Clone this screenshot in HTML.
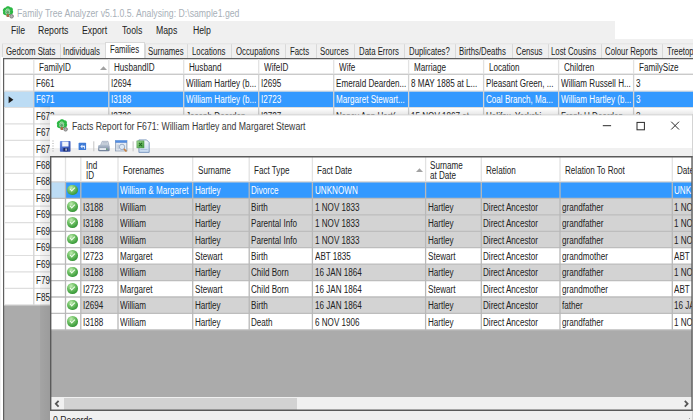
<!DOCTYPE html>
<html><head><meta charset="utf-8"><style>
html,body{margin:0;padding:0;}
body{width:695px;height:420px;overflow:hidden;position:relative;background:#f0f0f0;font-family:"Liberation Sans",sans-serif;}
.r{position:absolute;}
.t{position:absolute;white-space:nowrap;font-size:10px;line-height:10px;transform-origin:0 0;}
.s{transform:scaleX(0.87);}
.m{transform:scaleX(0.81);}
.chk{width:10.5px;height:10.5px;border-radius:50%;background:radial-gradient(circle at 38% 28%,#c2ecb4 0%,#78c66c 32%,#41a040 68%,#2b7d2d 100%);}
.chk::after{content:"";position:absolute;left:3.1px;top:2.6px;width:4.2px;height:2.2px;border-left:1.3px solid #f4fff2;border-bottom:1.3px solid #f4fff2;transform:rotate(-45deg);}
</style></head><body>
<div class="r" style="left:0px;top:0px;width:695px;height:21px;background:#fff;"></div>
<div class="r" style="left:0px;top:21px;width:615px;height:18px;background:#f0f0f0;"></div>
<div class="r" style="left:615px;top:21px;width:80px;height:18px;background:#fff;"></div>
<div class="r" style="left:0px;top:39px;width:695px;height:381px;background:#f0f0f0;"></div>
<svg class="r" style="left:1px;top:5px" width="14" height="14" viewBox="0 0 14 14">
<path d="M2.3 6.8 C1.2 5.2 2.4 2.6 4.4 2.7 C4.9 0.9 8.3 0.6 9.1 2.2 C11 1.8 12.6 3.7 11.7 5.6 C12.9 7.2 11.6 9.9 9.6 9.6 C8.6 11 5.2 11 4.2 9.9 C2.4 10.2 1.3 8.4 2.3 6.8Z" fill="#2cb844"/>
<path d="M4.6 5.6 C5 3.6 8.4 3.6 8.8 5.6" fill="none" stroke="#d8ecd8" stroke-width="0.9"/>
<circle cx="6.7" cy="7.4" r="2" fill="#5aa868" stroke="#c8d8c8" stroke-width="0.8"/>
<rect x="5.6" y="9" width="2.4" height="3" fill="#a86c4a"/>
<circle cx="10.6" cy="11.3" r="1.8" fill="#b0b0b0" stroke="#707070" stroke-width="0.8"/>
</svg>
<div class="t s" style="left:17.20px;top:8.83px;color:#a8b0b8;">Family Tree Analyzer v5.1.0.5. Analysing: D:\sample1.ged</div>
<div class="t s" style="left:11.00px;top:25.73px;color:#222;">File</div>
<div class="t s" style="left:38.30px;top:25.73px;color:#222;">Reports</div>
<div class="t s" style="left:82.40px;top:25.73px;color:#222;">Export</div>
<div class="t s" style="left:121.80px;top:25.73px;color:#222;">Tools</div>
<div class="t s" style="left:156.30px;top:25.73px;color:#222;">Maps</div>
<div class="t s" style="left:192.90px;top:25.73px;color:#222;">Help</div>
<svg class="r" style="left:0px;top:40px" width="695" height="19" viewBox="0 40 695 19"><line x1="2.5" y1="44" x2="2.5" y2="58" stroke="#d9d9d9" stroke-width="1"/><line x1="60.5" y1="44" x2="60.5" y2="58" stroke="#d9d9d9" stroke-width="1"/><line x1="145.5" y1="44" x2="145.5" y2="58" stroke="#d9d9d9" stroke-width="1"/><line x1="187.5" y1="44" x2="187.5" y2="58" stroke="#d9d9d9" stroke-width="1"/><line x1="231.5" y1="44" x2="231.5" y2="58" stroke="#d9d9d9" stroke-width="1"/><line x1="285.5" y1="44" x2="285.5" y2="58" stroke="#d9d9d9" stroke-width="1"/><line x1="316.5" y1="44" x2="316.5" y2="58" stroke="#d9d9d9" stroke-width="1"/><line x1="354.5" y1="44" x2="354.5" y2="58" stroke="#d9d9d9" stroke-width="1"/><line x1="404.5" y1="44" x2="404.5" y2="58" stroke="#d9d9d9" stroke-width="1"/><line x1="455.5" y1="44" x2="455.5" y2="58" stroke="#d9d9d9" stroke-width="1"/><line x1="512.5" y1="44" x2="512.5" y2="58" stroke="#d9d9d9" stroke-width="1"/><line x1="548.5" y1="44" x2="548.5" y2="58" stroke="#d9d9d9" stroke-width="1"/><line x1="601.5" y1="44" x2="601.5" y2="58" stroke="#d9d9d9" stroke-width="1"/><line x1="662.5" y1="44" x2="662.5" y2="58" stroke="#d9d9d9" stroke-width="1"/><line x1="2" y1="43.8" x2="693" y2="43.8" stroke="#e3e3e3" stroke-width="1"/></svg>
<div class="r" style="left:105px;top:42px;width:40px;height:17px;background:#fff;border:1px solid #d9d9d9;border-bottom:none;box-sizing:border-box"></div>
<div class="t m" style="left:5.69px;top:46.73px;color:#222;transform:scaleX(0.78)">Gedcom Stats</div>
<div class="t m" style="left:63.47px;top:46.73px;color:#222;transform:scaleX(0.78)">Individuals</div>
<div class="t m" style="left:109.88px;top:45.13px;color:#222;transform:scaleX(0.78)">Families</div>
<div class="t m" style="left:147.62px;top:46.73px;color:#222;transform:scaleX(0.78)">Surnames</div>
<div class="t m" style="left:191.70px;top:46.73px;color:#222;transform:scaleX(0.78)">Locations</div>
<div class="t m" style="left:235.72px;top:46.73px;color:#222;transform:scaleX(0.78)">Occupations</div>
<div class="t m" style="left:290.36px;top:46.73px;color:#222;transform:scaleX(0.78)">Facts</div>
<div class="t m" style="left:320.34px;top:46.73px;color:#222;transform:scaleX(0.78)">Sources</div>
<div class="t m" style="left:358.71px;top:46.73px;color:#222;transform:scaleX(0.78)">Data Errors</div>
<div class="t m" style="left:408.52px;top:46.73px;color:#222;transform:scaleX(0.78)">Duplicates?</div>
<div class="t m" style="left:459.49px;top:46.73px;color:#222;transform:scaleX(0.78)">Births/Deaths</div>
<div class="t m" style="left:516.18px;top:46.73px;color:#222;transform:scaleX(0.78)">Census</div>
<div class="t m" style="left:551.35px;top:46.73px;color:#222;transform:scaleX(0.78)">Lost Cousins</div>
<div class="t m" style="left:604.87px;top:46.73px;color:#222;transform:scaleX(0.78)">Colour Reports</div>
<div class="t m" style="left:666.90px;top:46.73px;color:#222;transform:scaleX(0.78)">Treetop Analysis</div>
<div class="r" style="left:1px;top:57px;width:1.5px;height:363px;background:#fff;"></div>
<div class="r" style="left:3px;top:58px;width:690px;height:362px;background:#ababab;"></div>
<div class="r" style="left:4px;top:59px;width:689px;height:15px;background:#fff;"></div>
<div class="r" style="left:4px;top:75px;width:689px;height:230px;background:#fff;"></div>
<div class="r" style="left:4px;top:91px;width:30px;height:16px;background:#bcdcf4;"></div>
<div class="r" style="left:34px;top:91px;width:659px;height:16px;background:#3399ff;"></div>
<svg class="r" style="left:8px;top:95.5px" width="6" height="8"><path d="M0.6 0.3 L5.4 3.8 L0.6 7.3Z" fill="#1a1a1a"/></svg>
<svg class="r" style="left:3px;top:58px" width="690" height="362" viewBox="3 58 690 362"><line x1="3" y1="58.5" x2="693" y2="58.5" stroke="#5e5e5e" stroke-width="1.4"/><line x1="3.5" y1="58" x2="3.5" y2="420" stroke="#5e5e5e" stroke-width="1.4"/><line x1="4" y1="74.2" x2="693" y2="74.2" stroke="#d4d4d4" stroke-width="1.3"/><line x1="33.8" y1="59" x2="33.8" y2="74" stroke="#e2e2e2" stroke-width="1.3"/><line x1="108.8" y1="59" x2="108.8" y2="74" stroke="#e2e2e2" stroke-width="1.3"/><line x1="183.7" y1="59" x2="183.7" y2="74" stroke="#e2e2e2" stroke-width="1.3"/><line x1="258.7" y1="59" x2="258.7" y2="74" stroke="#e2e2e2" stroke-width="1.3"/><line x1="333.7" y1="59" x2="333.7" y2="74" stroke="#e2e2e2" stroke-width="1.3"/><line x1="408.6" y1="59" x2="408.6" y2="74" stroke="#e2e2e2" stroke-width="1.3"/><line x1="483.6" y1="59" x2="483.6" y2="74" stroke="#e2e2e2" stroke-width="1.3"/><line x1="558.6" y1="59" x2="558.6" y2="74" stroke="#e2e2e2" stroke-width="1.3"/><line x1="633.6" y1="59" x2="633.6" y2="74" stroke="#e2e2e2" stroke-width="1.3"/><line x1="4" y1="91.046" x2="693" y2="91.046" stroke="#dedede" stroke-width="1.2"/><line x1="33.8" y1="74.6" x2="33.8" y2="91.046" stroke="#d2d2d2" stroke-width="1.3"/><line x1="108.8" y1="74.6" x2="108.8" y2="91.046" stroke="#d2d2d2" stroke-width="1.3"/><line x1="183.7" y1="74.6" x2="183.7" y2="91.046" stroke="#d2d2d2" stroke-width="1.3"/><line x1="258.7" y1="74.6" x2="258.7" y2="91.046" stroke="#d2d2d2" stroke-width="1.3"/><line x1="333.7" y1="74.6" x2="333.7" y2="91.046" stroke="#d2d2d2" stroke-width="1.3"/><line x1="408.6" y1="74.6" x2="408.6" y2="91.046" stroke="#d2d2d2" stroke-width="1.3"/><line x1="483.6" y1="74.6" x2="483.6" y2="91.046" stroke="#d2d2d2" stroke-width="1.3"/><line x1="558.6" y1="74.6" x2="558.6" y2="91.046" stroke="#d2d2d2" stroke-width="1.3"/><line x1="633.6" y1="74.6" x2="633.6" y2="91.046" stroke="#d2d2d2" stroke-width="1.3"/><line x1="4" y1="107.492" x2="693" y2="107.492" stroke="#dedede" stroke-width="1.2"/><line x1="33.8" y1="91.046" x2="33.8" y2="107.492" stroke="#d2d2d2" stroke-width="1.3"/><line x1="108.8" y1="91.046" x2="108.8" y2="107.492" stroke="#d2d2d2" stroke-width="1.3"/><line x1="183.7" y1="91.046" x2="183.7" y2="107.492" stroke="#d2d2d2" stroke-width="1.3"/><line x1="258.7" y1="91.046" x2="258.7" y2="107.492" stroke="#d2d2d2" stroke-width="1.3"/><line x1="333.7" y1="91.046" x2="333.7" y2="107.492" stroke="#d2d2d2" stroke-width="1.3"/><line x1="408.6" y1="91.046" x2="408.6" y2="107.492" stroke="#d2d2d2" stroke-width="1.3"/><line x1="483.6" y1="91.046" x2="483.6" y2="107.492" stroke="#d2d2d2" stroke-width="1.3"/><line x1="558.6" y1="91.046" x2="558.6" y2="107.492" stroke="#d2d2d2" stroke-width="1.3"/><line x1="633.6" y1="91.046" x2="633.6" y2="107.492" stroke="#d2d2d2" stroke-width="1.3"/><line x1="4" y1="123.938" x2="693" y2="123.938" stroke="#dedede" stroke-width="1.2"/><line x1="33.8" y1="107.492" x2="33.8" y2="123.938" stroke="#d2d2d2" stroke-width="1.3"/><line x1="108.8" y1="107.492" x2="108.8" y2="123.938" stroke="#d2d2d2" stroke-width="1.3"/><line x1="183.7" y1="107.492" x2="183.7" y2="123.938" stroke="#d2d2d2" stroke-width="1.3"/><line x1="258.7" y1="107.492" x2="258.7" y2="123.938" stroke="#d2d2d2" stroke-width="1.3"/><line x1="333.7" y1="107.492" x2="333.7" y2="123.938" stroke="#d2d2d2" stroke-width="1.3"/><line x1="408.6" y1="107.492" x2="408.6" y2="123.938" stroke="#d2d2d2" stroke-width="1.3"/><line x1="483.6" y1="107.492" x2="483.6" y2="123.938" stroke="#d2d2d2" stroke-width="1.3"/><line x1="558.6" y1="107.492" x2="558.6" y2="123.938" stroke="#d2d2d2" stroke-width="1.3"/><line x1="633.6" y1="107.492" x2="633.6" y2="123.938" stroke="#d2d2d2" stroke-width="1.3"/><line x1="4" y1="140.384" x2="693" y2="140.384" stroke="#dedede" stroke-width="1.2"/><line x1="33.8" y1="123.938" x2="33.8" y2="140.384" stroke="#d2d2d2" stroke-width="1.3"/><line x1="108.8" y1="123.938" x2="108.8" y2="140.384" stroke="#d2d2d2" stroke-width="1.3"/><line x1="183.7" y1="123.938" x2="183.7" y2="140.384" stroke="#d2d2d2" stroke-width="1.3"/><line x1="258.7" y1="123.938" x2="258.7" y2="140.384" stroke="#d2d2d2" stroke-width="1.3"/><line x1="333.7" y1="123.938" x2="333.7" y2="140.384" stroke="#d2d2d2" stroke-width="1.3"/><line x1="408.6" y1="123.938" x2="408.6" y2="140.384" stroke="#d2d2d2" stroke-width="1.3"/><line x1="483.6" y1="123.938" x2="483.6" y2="140.384" stroke="#d2d2d2" stroke-width="1.3"/><line x1="558.6" y1="123.938" x2="558.6" y2="140.384" stroke="#d2d2d2" stroke-width="1.3"/><line x1="633.6" y1="123.938" x2="633.6" y2="140.384" stroke="#d2d2d2" stroke-width="1.3"/><line x1="4" y1="156.83" x2="693" y2="156.83" stroke="#dedede" stroke-width="1.2"/><line x1="33.8" y1="140.384" x2="33.8" y2="156.83" stroke="#d2d2d2" stroke-width="1.3"/><line x1="108.8" y1="140.384" x2="108.8" y2="156.83" stroke="#d2d2d2" stroke-width="1.3"/><line x1="183.7" y1="140.384" x2="183.7" y2="156.83" stroke="#d2d2d2" stroke-width="1.3"/><line x1="258.7" y1="140.384" x2="258.7" y2="156.83" stroke="#d2d2d2" stroke-width="1.3"/><line x1="333.7" y1="140.384" x2="333.7" y2="156.83" stroke="#d2d2d2" stroke-width="1.3"/><line x1="408.6" y1="140.384" x2="408.6" y2="156.83" stroke="#d2d2d2" stroke-width="1.3"/><line x1="483.6" y1="140.384" x2="483.6" y2="156.83" stroke="#d2d2d2" stroke-width="1.3"/><line x1="558.6" y1="140.384" x2="558.6" y2="156.83" stroke="#d2d2d2" stroke-width="1.3"/><line x1="633.6" y1="140.384" x2="633.6" y2="156.83" stroke="#d2d2d2" stroke-width="1.3"/><line x1="4" y1="173.276" x2="693" y2="173.276" stroke="#dedede" stroke-width="1.2"/><line x1="33.8" y1="156.83" x2="33.8" y2="173.276" stroke="#d2d2d2" stroke-width="1.3"/><line x1="108.8" y1="156.83" x2="108.8" y2="173.276" stroke="#d2d2d2" stroke-width="1.3"/><line x1="183.7" y1="156.83" x2="183.7" y2="173.276" stroke="#d2d2d2" stroke-width="1.3"/><line x1="258.7" y1="156.83" x2="258.7" y2="173.276" stroke="#d2d2d2" stroke-width="1.3"/><line x1="333.7" y1="156.83" x2="333.7" y2="173.276" stroke="#d2d2d2" stroke-width="1.3"/><line x1="408.6" y1="156.83" x2="408.6" y2="173.276" stroke="#d2d2d2" stroke-width="1.3"/><line x1="483.6" y1="156.83" x2="483.6" y2="173.276" stroke="#d2d2d2" stroke-width="1.3"/><line x1="558.6" y1="156.83" x2="558.6" y2="173.276" stroke="#d2d2d2" stroke-width="1.3"/><line x1="633.6" y1="156.83" x2="633.6" y2="173.276" stroke="#d2d2d2" stroke-width="1.3"/><line x1="4" y1="189.722" x2="693" y2="189.722" stroke="#dedede" stroke-width="1.2"/><line x1="33.8" y1="173.276" x2="33.8" y2="189.722" stroke="#d2d2d2" stroke-width="1.3"/><line x1="108.8" y1="173.276" x2="108.8" y2="189.722" stroke="#d2d2d2" stroke-width="1.3"/><line x1="183.7" y1="173.276" x2="183.7" y2="189.722" stroke="#d2d2d2" stroke-width="1.3"/><line x1="258.7" y1="173.276" x2="258.7" y2="189.722" stroke="#d2d2d2" stroke-width="1.3"/><line x1="333.7" y1="173.276" x2="333.7" y2="189.722" stroke="#d2d2d2" stroke-width="1.3"/><line x1="408.6" y1="173.276" x2="408.6" y2="189.722" stroke="#d2d2d2" stroke-width="1.3"/><line x1="483.6" y1="173.276" x2="483.6" y2="189.722" stroke="#d2d2d2" stroke-width="1.3"/><line x1="558.6" y1="173.276" x2="558.6" y2="189.722" stroke="#d2d2d2" stroke-width="1.3"/><line x1="633.6" y1="173.276" x2="633.6" y2="189.722" stroke="#d2d2d2" stroke-width="1.3"/><line x1="4" y1="206.168" x2="693" y2="206.168" stroke="#dedede" stroke-width="1.2"/><line x1="33.8" y1="189.722" x2="33.8" y2="206.168" stroke="#d2d2d2" stroke-width="1.3"/><line x1="108.8" y1="189.722" x2="108.8" y2="206.168" stroke="#d2d2d2" stroke-width="1.3"/><line x1="183.7" y1="189.722" x2="183.7" y2="206.168" stroke="#d2d2d2" stroke-width="1.3"/><line x1="258.7" y1="189.722" x2="258.7" y2="206.168" stroke="#d2d2d2" stroke-width="1.3"/><line x1="333.7" y1="189.722" x2="333.7" y2="206.168" stroke="#d2d2d2" stroke-width="1.3"/><line x1="408.6" y1="189.722" x2="408.6" y2="206.168" stroke="#d2d2d2" stroke-width="1.3"/><line x1="483.6" y1="189.722" x2="483.6" y2="206.168" stroke="#d2d2d2" stroke-width="1.3"/><line x1="558.6" y1="189.722" x2="558.6" y2="206.168" stroke="#d2d2d2" stroke-width="1.3"/><line x1="633.6" y1="189.722" x2="633.6" y2="206.168" stroke="#d2d2d2" stroke-width="1.3"/><line x1="4" y1="222.614" x2="693" y2="222.614" stroke="#dedede" stroke-width="1.2"/><line x1="33.8" y1="206.168" x2="33.8" y2="222.614" stroke="#d2d2d2" stroke-width="1.3"/><line x1="108.8" y1="206.168" x2="108.8" y2="222.614" stroke="#d2d2d2" stroke-width="1.3"/><line x1="183.7" y1="206.168" x2="183.7" y2="222.614" stroke="#d2d2d2" stroke-width="1.3"/><line x1="258.7" y1="206.168" x2="258.7" y2="222.614" stroke="#d2d2d2" stroke-width="1.3"/><line x1="333.7" y1="206.168" x2="333.7" y2="222.614" stroke="#d2d2d2" stroke-width="1.3"/><line x1="408.6" y1="206.168" x2="408.6" y2="222.614" stroke="#d2d2d2" stroke-width="1.3"/><line x1="483.6" y1="206.168" x2="483.6" y2="222.614" stroke="#d2d2d2" stroke-width="1.3"/><line x1="558.6" y1="206.168" x2="558.6" y2="222.614" stroke="#d2d2d2" stroke-width="1.3"/><line x1="633.6" y1="206.168" x2="633.6" y2="222.614" stroke="#d2d2d2" stroke-width="1.3"/><line x1="4" y1="239.06" x2="693" y2="239.06" stroke="#dedede" stroke-width="1.2"/><line x1="33.8" y1="222.614" x2="33.8" y2="239.06" stroke="#d2d2d2" stroke-width="1.3"/><line x1="108.8" y1="222.614" x2="108.8" y2="239.06" stroke="#d2d2d2" stroke-width="1.3"/><line x1="183.7" y1="222.614" x2="183.7" y2="239.06" stroke="#d2d2d2" stroke-width="1.3"/><line x1="258.7" y1="222.614" x2="258.7" y2="239.06" stroke="#d2d2d2" stroke-width="1.3"/><line x1="333.7" y1="222.614" x2="333.7" y2="239.06" stroke="#d2d2d2" stroke-width="1.3"/><line x1="408.6" y1="222.614" x2="408.6" y2="239.06" stroke="#d2d2d2" stroke-width="1.3"/><line x1="483.6" y1="222.614" x2="483.6" y2="239.06" stroke="#d2d2d2" stroke-width="1.3"/><line x1="558.6" y1="222.614" x2="558.6" y2="239.06" stroke="#d2d2d2" stroke-width="1.3"/><line x1="633.6" y1="222.614" x2="633.6" y2="239.06" stroke="#d2d2d2" stroke-width="1.3"/><line x1="4" y1="255.506" x2="693" y2="255.506" stroke="#dedede" stroke-width="1.2"/><line x1="33.8" y1="239.06" x2="33.8" y2="255.506" stroke="#d2d2d2" stroke-width="1.3"/><line x1="108.8" y1="239.06" x2="108.8" y2="255.506" stroke="#d2d2d2" stroke-width="1.3"/><line x1="183.7" y1="239.06" x2="183.7" y2="255.506" stroke="#d2d2d2" stroke-width="1.3"/><line x1="258.7" y1="239.06" x2="258.7" y2="255.506" stroke="#d2d2d2" stroke-width="1.3"/><line x1="333.7" y1="239.06" x2="333.7" y2="255.506" stroke="#d2d2d2" stroke-width="1.3"/><line x1="408.6" y1="239.06" x2="408.6" y2="255.506" stroke="#d2d2d2" stroke-width="1.3"/><line x1="483.6" y1="239.06" x2="483.6" y2="255.506" stroke="#d2d2d2" stroke-width="1.3"/><line x1="558.6" y1="239.06" x2="558.6" y2="255.506" stroke="#d2d2d2" stroke-width="1.3"/><line x1="633.6" y1="239.06" x2="633.6" y2="255.506" stroke="#d2d2d2" stroke-width="1.3"/><line x1="4" y1="271.952" x2="693" y2="271.952" stroke="#dedede" stroke-width="1.2"/><line x1="33.8" y1="255.506" x2="33.8" y2="271.952" stroke="#d2d2d2" stroke-width="1.3"/><line x1="108.8" y1="255.506" x2="108.8" y2="271.952" stroke="#d2d2d2" stroke-width="1.3"/><line x1="183.7" y1="255.506" x2="183.7" y2="271.952" stroke="#d2d2d2" stroke-width="1.3"/><line x1="258.7" y1="255.506" x2="258.7" y2="271.952" stroke="#d2d2d2" stroke-width="1.3"/><line x1="333.7" y1="255.506" x2="333.7" y2="271.952" stroke="#d2d2d2" stroke-width="1.3"/><line x1="408.6" y1="255.506" x2="408.6" y2="271.952" stroke="#d2d2d2" stroke-width="1.3"/><line x1="483.6" y1="255.506" x2="483.6" y2="271.952" stroke="#d2d2d2" stroke-width="1.3"/><line x1="558.6" y1="255.506" x2="558.6" y2="271.952" stroke="#d2d2d2" stroke-width="1.3"/><line x1="633.6" y1="255.506" x2="633.6" y2="271.952" stroke="#d2d2d2" stroke-width="1.3"/><line x1="4" y1="288.398" x2="693" y2="288.398" stroke="#dedede" stroke-width="1.2"/><line x1="33.8" y1="271.952" x2="33.8" y2="288.398" stroke="#d2d2d2" stroke-width="1.3"/><line x1="108.8" y1="271.952" x2="108.8" y2="288.398" stroke="#d2d2d2" stroke-width="1.3"/><line x1="183.7" y1="271.952" x2="183.7" y2="288.398" stroke="#d2d2d2" stroke-width="1.3"/><line x1="258.7" y1="271.952" x2="258.7" y2="288.398" stroke="#d2d2d2" stroke-width="1.3"/><line x1="333.7" y1="271.952" x2="333.7" y2="288.398" stroke="#d2d2d2" stroke-width="1.3"/><line x1="408.6" y1="271.952" x2="408.6" y2="288.398" stroke="#d2d2d2" stroke-width="1.3"/><line x1="483.6" y1="271.952" x2="483.6" y2="288.398" stroke="#d2d2d2" stroke-width="1.3"/><line x1="558.6" y1="271.952" x2="558.6" y2="288.398" stroke="#d2d2d2" stroke-width="1.3"/><line x1="633.6" y1="271.952" x2="633.6" y2="288.398" stroke="#d2d2d2" stroke-width="1.3"/><line x1="4" y1="304.844" x2="693" y2="304.844" stroke="#dedede" stroke-width="1.2"/><line x1="33.8" y1="288.398" x2="33.8" y2="304.844" stroke="#d2d2d2" stroke-width="1.3"/><line x1="108.8" y1="288.398" x2="108.8" y2="304.844" stroke="#d2d2d2" stroke-width="1.3"/><line x1="183.7" y1="288.398" x2="183.7" y2="304.844" stroke="#d2d2d2" stroke-width="1.3"/><line x1="258.7" y1="288.398" x2="258.7" y2="304.844" stroke="#d2d2d2" stroke-width="1.3"/><line x1="333.7" y1="288.398" x2="333.7" y2="304.844" stroke="#d2d2d2" stroke-width="1.3"/><line x1="408.6" y1="288.398" x2="408.6" y2="304.844" stroke="#d2d2d2" stroke-width="1.3"/><line x1="483.6" y1="288.398" x2="483.6" y2="304.844" stroke="#d2d2d2" stroke-width="1.3"/><line x1="558.6" y1="288.398" x2="558.6" y2="304.844" stroke="#d2d2d2" stroke-width="1.3"/><line x1="633.6" y1="288.398" x2="633.6" y2="304.844" stroke="#d2d2d2" stroke-width="1.3"/></svg>
<div class="t m" style="left:39.00px;top:62.53px;color:#222;">FamilyID</div>
<div class="t m" style="left:114.00px;top:62.53px;color:#222;">HusbandID</div>
<div class="t m" style="left:188.90px;top:62.53px;color:#222;">Husband</div>
<div class="t m" style="left:263.90px;top:62.53px;color:#222;">WifeID</div>
<div class="t m" style="left:338.90px;top:62.53px;color:#222;">Wife</div>
<div class="t m" style="left:413.80px;top:62.53px;color:#222;">Marriage</div>
<div class="t m" style="left:488.80px;top:62.53px;color:#222;">Location</div>
<div class="t m" style="left:563.80px;top:62.53px;color:#222;">Children</div>
<div class="t m" style="left:638.80px;top:62.53px;color:#222;">FamilySize</div>
<svg class="r" style="left:100px;top:65.5px" width="7" height="4"><path d="M0 4 L3.5 0.3 L7 4Z" fill="#a2a2a2"/></svg>
<div class="t m" style="left:36.10px;top:78.73px;color:#222;">F661</div>
<div class="t m" style="left:111.10px;top:78.73px;color:#222;">I2694</div>
<div class="t m" style="left:186.00px;top:78.73px;color:#222;">William Hartley (b...</div>
<div class="t m" style="left:261.00px;top:78.73px;color:#222;">I2695</div>
<div class="t m" style="left:336.00px;top:78.73px;color:#222;">Emerald Dearden...</div>
<div class="t m" style="left:410.90px;top:78.73px;color:#222;">8 MAY 1885 at L...</div>
<div class="t m" style="left:485.90px;top:78.73px;color:#222;">Pleasant Green, ...</div>
<div class="t m" style="left:560.90px;top:78.73px;color:#222;">William Russell H...</div>
<div class="t m" style="left:635.90px;top:78.73px;color:#222;">3</div>
<div class="t m" style="left:36.10px;top:95.18px;color:#fff;">F671</div>
<div class="t m" style="left:111.10px;top:95.18px;color:#fff;">I3188</div>
<div class="t m" style="left:186.00px;top:95.18px;color:#fff;">William Hartley (b...</div>
<div class="t m" style="left:261.00px;top:95.18px;color:#fff;">I2723</div>
<div class="t m" style="left:336.00px;top:95.18px;color:#fff;">Margaret Stewart...</div>
<div class="t m" style="left:485.90px;top:95.18px;color:#fff;">Coal Branch, Ma...</div>
<div class="t m" style="left:560.90px;top:95.18px;color:#fff;">William Hartley (b...</div>
<div class="t m" style="left:635.90px;top:95.18px;color:#fff;">3</div>
<div class="t m" style="left:36.10px;top:111.62px;color:#222;">F672</div>
<div class="t m" style="left:111.10px;top:111.62px;color:#222;">I2726</div>
<div class="t m" style="left:186.00px;top:111.62px;color:#222;">Joseph Dearden ...</div>
<div class="t m" style="left:261.00px;top:111.62px;color:#222;">I2727</div>
<div class="t m" style="left:336.00px;top:111.62px;color:#222;">Nancy Ann Hart(...</div>
<div class="t m" style="left:410.90px;top:111.62px;color:#222;">15 NOV 1867 at ...</div>
<div class="t m" style="left:485.90px;top:111.62px;color:#222;">Halifax, Yorkshi...</div>
<div class="t m" style="left:560.90px;top:111.62px;color:#222;">Frank H Dearden...</div>
<div class="t m" style="left:635.90px;top:111.62px;color:#222;">3</div>
<div class="t m" style="left:36.10px;top:128.07px;color:#222;">F673</div>
<div class="t m" style="left:36.10px;top:144.51px;color:#222;">F674</div>
<div class="t m" style="left:36.10px;top:160.96px;color:#222;">F681</div>
<div class="t m" style="left:36.10px;top:177.41px;color:#222;">F682</div>
<div class="t m" style="left:36.10px;top:193.85px;color:#222;">F691</div>
<div class="t m" style="left:36.10px;top:210.30px;color:#222;">F692</div>
<div class="t m" style="left:36.10px;top:226.74px;color:#222;">F693</div>
<div class="t m" style="left:36.10px;top:243.19px;color:#222;">F694</div>
<div class="t m" style="left:36.10px;top:259.64px;color:#222;">F695</div>
<div class="t m" style="left:36.10px;top:276.08px;color:#222;">F791</div>
<div class="t m" style="left:36.10px;top:292.53px;color:#222;">F851</div>
<div class="r" style="left:693px;top:21px;width:2px;height:399px;background:#fff;"></div>
<div class="r" style="left:40px;top:106px;width:10px;height:314px;background:linear-gradient(to right,rgba(0,0,0,0.04),rgba(0,0,0,0.09))"></div>
<div class="r" style="left:50px;top:107.5px;width:643px;height:7px;background:linear-gradient(to bottom,rgba(0,0,0,0),rgba(0,0,0,0.1))"></div>
<div class="r" style="left:50px;top:114.5px;width:643px;height:305.5px;background:#fff;"></div>
<svg class="r" style="left:50px;top:114px" width="643" height="306" viewBox="50 114 643 306"><line x1="50" y1="114.9" x2="693" y2="114.9" stroke="#d4d4d4" stroke-width="1"/><line x1="692.6" y1="114" x2="692.6" y2="420" stroke="#d0d0d0" stroke-width="1"/></svg>
<svg class="r" style="left:55px;top:117.5px" width="14" height="14" viewBox="0 0 14 14">
<path d="M2.3 6.8 C1.2 5.2 2.4 2.6 4.4 2.7 C4.9 0.9 8.3 0.6 9.1 2.2 C11 1.8 12.6 3.7 11.7 5.6 C12.9 7.2 11.6 9.9 9.6 9.6 C8.6 11 5.2 11 4.2 9.9 C2.4 10.2 1.3 8.4 2.3 6.8Z" fill="#2cb844"/>
<path d="M4.6 5.6 C5 3.6 8.4 3.6 8.8 5.6" fill="none" stroke="#d8ecd8" stroke-width="0.9"/>
<circle cx="6.7" cy="7.4" r="2" fill="#5aa868" stroke="#c8d8c8" stroke-width="0.8"/>
<rect x="5.6" y="9" width="2.4" height="3" fill="#a86c4a"/>
<circle cx="10.6" cy="11.3" r="1.8" fill="#b0b0b0" stroke="#707070" stroke-width="0.8"/>
</svg>
<div class="t s" style="left:71.50px;top:121.63px;color:#383838;">Facts Report for F671: William Hartley and Margaret Stewart</div>
<svg class="r" style="left:600px;top:119px" width="82" height="12">
<path d="M2.8 6.7 H11.1" stroke="#2a2a2a" stroke-width="1" fill="none"/>
<rect x="37" y="3.4" width="7.4" height="7.4" stroke="#2a2a2a" stroke-width="1" fill="none"/>
<path d="M71.2 2.7 L79 10.5 M79 2.7 L71.2 10.5" stroke="#2a2a2a" stroke-width="1" fill="none"/>
</svg>
<div class="r" style="left:50px;top:147.5px;width:642px;height:8.5px;background:#f0f0f0;"></div>
<svg class="r" style="left:52px;top:139px" width="100" height="15" viewBox="52 139 100 15">
<g fill="#a8a8a8"><rect x="52.5" y="140.5" width="1" height="1"/><rect x="52.5" y="143" width="1" height="1"/><rect x="52.5" y="145.5" width="1" height="1"/><rect x="52.5" y="148" width="1" height="1"/><rect x="52.5" y="150.5" width="1" height="1"/></g>
<defs><linearGradient id="fl" x1="0" y1="0" x2="1" y2="1"><stop offset="0" stop-color="#7c9cec"/><stop offset="0.5" stop-color="#4666c8"/><stop offset="1" stop-color="#2a449c"/></linearGradient>
<linearGradient id="xg" x1="0" y1="0" x2="1" y2="1"><stop offset="0" stop-color="#a6dc96"/><stop offset="1" stop-color="#3c9a3c"/></linearGradient>
<linearGradient id="dc" x1="0" y1="0" x2="0" y2="1"><stop offset="0" stop-color="#f4f8fc"/><stop offset="1" stop-color="#c4d8f0"/></linearGradient></defs>
<rect x="59.9" y="141" width="10.6" height="10.7" rx="0.8" fill="url(#fl)"/>
<rect x="62.2" y="141.6" width="6.3" height="4.9" fill="#f2f4fa"/>
<rect x="63.4" y="148" width="4.2" height="3.3" fill="#1c2a60"/>
<rect x="65.4" y="148.5" width="1.4" height="2.2" fill="#c8d0e8"/>
<rect x="78.6" y="142.8" width="7.5" height="7.2" rx="0.6" fill="#3d7ad6"/>
<path d="M80.3 146.4 L82.4 144.4 L82.4 148.4Z" fill="#e9f1ff"/>
<rect x="82.2" y="145.7" width="2.2" height="1.4" fill="#e9f1ff"/>
<rect x="84" y="145.7" width="0.9" height="3" fill="#e9f1ff"/>
<rect x="93.3" y="141.3" width="1" height="10" fill="#c4c4c4"/>
<defs><linearGradient id="pb" x1="0" y1="0" x2="0" y2="1"><stop offset="0" stop-color="#b4c0d0"/><stop offset="1" stop-color="#6a7b94"/></linearGradient>
<linearGradient id="pv" x1="0" y1="0" x2="0" y2="1"><stop offset="0" stop-color="#6aa4f0"/><stop offset="1" stop-color="#3a78d8"/></linearGradient></defs>
<path d="M100.6 145.2 L102.2 141.3 H108 L108.9 145.2Z" fill="#d6dde6" stroke="#8d9bb0" stroke-width="0.6"/>
<path d="M102.8 142.5 H107.2 M102.4 143.8 H107.6" stroke="#a9b5c4" stroke-width="0.6"/>
<rect x="98.1" y="145" width="11.6" height="6.3" rx="1.4" fill="url(#pb)"/>
<rect x="99.4" y="148.2" width="6.6" height="1.7" fill="#f3f6fa"/>
<circle cx="106.8" cy="149.1" r="0.6" fill="#56b04e"/>
<rect x="115.3" y="140.3" width="11.7" height="10.7" fill="#c3cfde" stroke="#7b8da6" stroke-width="0.6"/>
<rect x="115.3" y="140.3" width="11.7" height="2.3" fill="url(#pv)"/>
<rect x="116.3" y="143" width="9.7" height="7.3" fill="#e6ecf4"/>
<path d="M117.2 144.5 V149.5 M118.6 144.5 V149.5" stroke="#b6c2d2" stroke-width="0.8"/>
<circle cx="122" cy="146.9" r="2.7" fill="#dde9f6" stroke="#8ba0bc" stroke-width="0.8"/>
<path d="M123.9 148.9 L126.5 151.5" stroke="#c8803e" stroke-width="1.7"/>
<rect x="132.6" y="141.3" width="1" height="10" fill="#c4c4c4"/>
<path d="M138.9 139.9 H146.6 L149.2 142.5 V152.4 H138.9Z" fill="url(#dc)" stroke="#6f8db8" stroke-width="0.8"/>
<path d="M140.5 149.5 H147.5" stroke="#9fb8d8" stroke-width="0.7"/>
<rect x="136.9" y="140.9" width="7.1" height="7" fill="url(#xg)" stroke="#3f8f3f" stroke-width="0.5"/>
<path d="M139 142.8 L142 146.2 M142 142.8 L139 146.2" stroke="#1f6a22" stroke-width="1.1"/>
</svg>
<div class="r" style="left:51px;top:157px;width:641px;height:253px;overflow:hidden;background:#ababab">
<div class="r" style="left:0px;top:0px;width:641px;height:25px;background:#fff;"></div>
<div class="r" style="left:0px;top:25px;width:14.5px;height:16px;background:#bcdcf4;"></div>
<div class="r" style="left:14.5px;top:25px;width:627px;height:16px;background:#3399ff;"></div>
<div class="r" style="left:0px;top:41px;width:30px;height:17px;background:#fff;"></div>
<div class="r" style="left:30px;top:41px;width:611px;height:17px;background:#d3d3d3;"></div>
<div class="r" style="left:0px;top:58px;width:30px;height:16px;background:#fff;"></div>
<div class="r" style="left:30px;top:58px;width:611px;height:16px;background:#d3d3d3;"></div>
<div class="r" style="left:0px;top:74px;width:30px;height:17px;background:#fff;"></div>
<div class="r" style="left:30px;top:74px;width:611px;height:17px;background:#d3d3d3;"></div>
<div class="r" style="left:0px;top:91px;width:30px;height:16px;background:#fff;"></div>
<div class="r" style="left:30px;top:91px;width:611px;height:16px;background:#fff;"></div>
<div class="r" style="left:0px;top:107px;width:30px;height:17px;background:#fff;"></div>
<div class="r" style="left:30px;top:107px;width:611px;height:17px;background:#d3d3d3;"></div>
<div class="r" style="left:0px;top:124px;width:30px;height:16px;background:#fff;"></div>
<div class="r" style="left:30px;top:124px;width:611px;height:16px;background:#fff;"></div>
<div class="r" style="left:0px;top:140px;width:30px;height:16px;background:#fff;"></div>
<div class="r" style="left:30px;top:140px;width:611px;height:16px;background:#d3d3d3;"></div>
<div class="r" style="left:0px;top:156px;width:30px;height:17px;background:#fff;"></div>
<div class="r" style="left:30px;top:156px;width:611px;height:17px;background:#fff;"></div>
<svg class="r" style="left:0px;top:0px" width="641" height="253" viewBox="51 157 641 253"><line x1="51" y1="181.8" x2="692" y2="181.8" stroke="#d0d0d0" stroke-width="1.3"/><line x1="65.5" y1="157" x2="65.5" y2="181.5" stroke="#e2e2e2" stroke-width="1.3"/><line x1="80.8" y1="157" x2="80.8" y2="181.5" stroke="#e2e2e2" stroke-width="1.3"/><line x1="118" y1="157" x2="118" y2="181.5" stroke="#e2e2e2" stroke-width="1.3"/><line x1="192.7" y1="157" x2="192.7" y2="181.5" stroke="#e2e2e2" stroke-width="1.3"/><line x1="249.2" y1="157" x2="249.2" y2="181.5" stroke="#e2e2e2" stroke-width="1.3"/><line x1="312.4" y1="157" x2="312.4" y2="181.5" stroke="#e2e2e2" stroke-width="1.3"/><line x1="425.6" y1="157" x2="425.6" y2="181.5" stroke="#e2e2e2" stroke-width="1.3"/><line x1="481.3" y1="157" x2="481.3" y2="181.5" stroke="#e2e2e2" stroke-width="1.3"/><line x1="560" y1="157" x2="560" y2="181.5" stroke="#e2e2e2" stroke-width="1.3"/><line x1="672.3" y1="157" x2="672.3" y2="181.5" stroke="#e2e2e2" stroke-width="1.3"/><line x1="51" y1="198.43" x2="692" y2="198.43" stroke="#bdbdbd" stroke-width="1.3"/><line x1="65.5" y1="182" x2="65.5" y2="198.43" stroke="#b8b8b8" stroke-width="1.3"/><line x1="80.8" y1="182" x2="80.8" y2="198.43" stroke="#b8b8b8" stroke-width="1.3"/><line x1="118" y1="182" x2="118" y2="198.43" stroke="#b8b8b8" stroke-width="1.3"/><line x1="192.7" y1="182" x2="192.7" y2="198.43" stroke="#b8b8b8" stroke-width="1.3"/><line x1="249.2" y1="182" x2="249.2" y2="198.43" stroke="#b8b8b8" stroke-width="1.3"/><line x1="312.4" y1="182" x2="312.4" y2="198.43" stroke="#b8b8b8" stroke-width="1.3"/><line x1="425.6" y1="182" x2="425.6" y2="198.43" stroke="#b8b8b8" stroke-width="1.3"/><line x1="481.3" y1="182" x2="481.3" y2="198.43" stroke="#b8b8b8" stroke-width="1.3"/><line x1="560" y1="182" x2="560" y2="198.43" stroke="#b8b8b8" stroke-width="1.3"/><line x1="672.3" y1="182" x2="672.3" y2="198.43" stroke="#b8b8b8" stroke-width="1.3"/><line x1="51" y1="214.86" x2="692" y2="214.86" stroke="#bdbdbd" stroke-width="1.3"/><line x1="65.5" y1="198.43" x2="65.5" y2="214.86" stroke="#b8b8b8" stroke-width="1.3"/><line x1="80.8" y1="198.43" x2="80.8" y2="214.86" stroke="#b8b8b8" stroke-width="1.3"/><line x1="118" y1="198.43" x2="118" y2="214.86" stroke="#b8b8b8" stroke-width="1.3"/><line x1="192.7" y1="198.43" x2="192.7" y2="214.86" stroke="#b8b8b8" stroke-width="1.3"/><line x1="249.2" y1="198.43" x2="249.2" y2="214.86" stroke="#b8b8b8" stroke-width="1.3"/><line x1="312.4" y1="198.43" x2="312.4" y2="214.86" stroke="#b8b8b8" stroke-width="1.3"/><line x1="425.6" y1="198.43" x2="425.6" y2="214.86" stroke="#b8b8b8" stroke-width="1.3"/><line x1="481.3" y1="198.43" x2="481.3" y2="214.86" stroke="#b8b8b8" stroke-width="1.3"/><line x1="560" y1="198.43" x2="560" y2="214.86" stroke="#b8b8b8" stroke-width="1.3"/><line x1="672.3" y1="198.43" x2="672.3" y2="214.86" stroke="#b8b8b8" stroke-width="1.3"/><line x1="51" y1="231.29" x2="692" y2="231.29" stroke="#bdbdbd" stroke-width="1.3"/><line x1="65.5" y1="214.86" x2="65.5" y2="231.29" stroke="#b8b8b8" stroke-width="1.3"/><line x1="80.8" y1="214.86" x2="80.8" y2="231.29" stroke="#b8b8b8" stroke-width="1.3"/><line x1="118" y1="214.86" x2="118" y2="231.29" stroke="#b8b8b8" stroke-width="1.3"/><line x1="192.7" y1="214.86" x2="192.7" y2="231.29" stroke="#b8b8b8" stroke-width="1.3"/><line x1="249.2" y1="214.86" x2="249.2" y2="231.29" stroke="#b8b8b8" stroke-width="1.3"/><line x1="312.4" y1="214.86" x2="312.4" y2="231.29" stroke="#b8b8b8" stroke-width="1.3"/><line x1="425.6" y1="214.86" x2="425.6" y2="231.29" stroke="#b8b8b8" stroke-width="1.3"/><line x1="481.3" y1="214.86" x2="481.3" y2="231.29" stroke="#b8b8b8" stroke-width="1.3"/><line x1="560" y1="214.86" x2="560" y2="231.29" stroke="#b8b8b8" stroke-width="1.3"/><line x1="672.3" y1="214.86" x2="672.3" y2="231.29" stroke="#b8b8b8" stroke-width="1.3"/><line x1="51" y1="247.72" x2="692" y2="247.72" stroke="#bdbdbd" stroke-width="1.3"/><line x1="65.5" y1="231.29" x2="65.5" y2="247.72" stroke="#b8b8b8" stroke-width="1.3"/><line x1="80.8" y1="231.29" x2="80.8" y2="247.72" stroke="#b8b8b8" stroke-width="1.3"/><line x1="118" y1="231.29" x2="118" y2="247.72" stroke="#b8b8b8" stroke-width="1.3"/><line x1="192.7" y1="231.29" x2="192.7" y2="247.72" stroke="#b8b8b8" stroke-width="1.3"/><line x1="249.2" y1="231.29" x2="249.2" y2="247.72" stroke="#b8b8b8" stroke-width="1.3"/><line x1="312.4" y1="231.29" x2="312.4" y2="247.72" stroke="#b8b8b8" stroke-width="1.3"/><line x1="425.6" y1="231.29" x2="425.6" y2="247.72" stroke="#b8b8b8" stroke-width="1.3"/><line x1="481.3" y1="231.29" x2="481.3" y2="247.72" stroke="#b8b8b8" stroke-width="1.3"/><line x1="560" y1="231.29" x2="560" y2="247.72" stroke="#b8b8b8" stroke-width="1.3"/><line x1="672.3" y1="231.29" x2="672.3" y2="247.72" stroke="#b8b8b8" stroke-width="1.3"/><line x1="51" y1="264.15" x2="692" y2="264.15" stroke="#bdbdbd" stroke-width="1.3"/><line x1="65.5" y1="247.72" x2="65.5" y2="264.15" stroke="#b8b8b8" stroke-width="1.3"/><line x1="80.8" y1="247.72" x2="80.8" y2="264.15" stroke="#b8b8b8" stroke-width="1.3"/><line x1="118" y1="247.72" x2="118" y2="264.15" stroke="#b8b8b8" stroke-width="1.3"/><line x1="192.7" y1="247.72" x2="192.7" y2="264.15" stroke="#b8b8b8" stroke-width="1.3"/><line x1="249.2" y1="247.72" x2="249.2" y2="264.15" stroke="#b8b8b8" stroke-width="1.3"/><line x1="312.4" y1="247.72" x2="312.4" y2="264.15" stroke="#b8b8b8" stroke-width="1.3"/><line x1="425.6" y1="247.72" x2="425.6" y2="264.15" stroke="#b8b8b8" stroke-width="1.3"/><line x1="481.3" y1="247.72" x2="481.3" y2="264.15" stroke="#b8b8b8" stroke-width="1.3"/><line x1="560" y1="247.72" x2="560" y2="264.15" stroke="#b8b8b8" stroke-width="1.3"/><line x1="672.3" y1="247.72" x2="672.3" y2="264.15" stroke="#b8b8b8" stroke-width="1.3"/><line x1="51" y1="280.58" x2="692" y2="280.58" stroke="#bdbdbd" stroke-width="1.3"/><line x1="65.5" y1="264.15" x2="65.5" y2="280.58" stroke="#b8b8b8" stroke-width="1.3"/><line x1="80.8" y1="264.15" x2="80.8" y2="280.58" stroke="#b8b8b8" stroke-width="1.3"/><line x1="118" y1="264.15" x2="118" y2="280.58" stroke="#b8b8b8" stroke-width="1.3"/><line x1="192.7" y1="264.15" x2="192.7" y2="280.58" stroke="#b8b8b8" stroke-width="1.3"/><line x1="249.2" y1="264.15" x2="249.2" y2="280.58" stroke="#b8b8b8" stroke-width="1.3"/><line x1="312.4" y1="264.15" x2="312.4" y2="280.58" stroke="#b8b8b8" stroke-width="1.3"/><line x1="425.6" y1="264.15" x2="425.6" y2="280.58" stroke="#b8b8b8" stroke-width="1.3"/><line x1="481.3" y1="264.15" x2="481.3" y2="280.58" stroke="#b8b8b8" stroke-width="1.3"/><line x1="560" y1="264.15" x2="560" y2="280.58" stroke="#b8b8b8" stroke-width="1.3"/><line x1="672.3" y1="264.15" x2="672.3" y2="280.58" stroke="#b8b8b8" stroke-width="1.3"/><line x1="51" y1="297.01" x2="692" y2="297.01" stroke="#bdbdbd" stroke-width="1.3"/><line x1="65.5" y1="280.58" x2="65.5" y2="297.01" stroke="#b8b8b8" stroke-width="1.3"/><line x1="80.8" y1="280.58" x2="80.8" y2="297.01" stroke="#b8b8b8" stroke-width="1.3"/><line x1="118" y1="280.58" x2="118" y2="297.01" stroke="#b8b8b8" stroke-width="1.3"/><line x1="192.7" y1="280.58" x2="192.7" y2="297.01" stroke="#b8b8b8" stroke-width="1.3"/><line x1="249.2" y1="280.58" x2="249.2" y2="297.01" stroke="#b8b8b8" stroke-width="1.3"/><line x1="312.4" y1="280.58" x2="312.4" y2="297.01" stroke="#b8b8b8" stroke-width="1.3"/><line x1="425.6" y1="280.58" x2="425.6" y2="297.01" stroke="#b8b8b8" stroke-width="1.3"/><line x1="481.3" y1="280.58" x2="481.3" y2="297.01" stroke="#b8b8b8" stroke-width="1.3"/><line x1="560" y1="280.58" x2="560" y2="297.01" stroke="#b8b8b8" stroke-width="1.3"/><line x1="672.3" y1="280.58" x2="672.3" y2="297.01" stroke="#b8b8b8" stroke-width="1.3"/><line x1="51" y1="313.44" x2="692" y2="313.44" stroke="#bdbdbd" stroke-width="1.3"/><line x1="65.5" y1="297.01" x2="65.5" y2="313.44" stroke="#b8b8b8" stroke-width="1.3"/><line x1="80.8" y1="297.01" x2="80.8" y2="313.44" stroke="#b8b8b8" stroke-width="1.3"/><line x1="118" y1="297.01" x2="118" y2="313.44" stroke="#b8b8b8" stroke-width="1.3"/><line x1="192.7" y1="297.01" x2="192.7" y2="313.44" stroke="#b8b8b8" stroke-width="1.3"/><line x1="249.2" y1="297.01" x2="249.2" y2="313.44" stroke="#b8b8b8" stroke-width="1.3"/><line x1="312.4" y1="297.01" x2="312.4" y2="313.44" stroke="#b8b8b8" stroke-width="1.3"/><line x1="425.6" y1="297.01" x2="425.6" y2="313.44" stroke="#b8b8b8" stroke-width="1.3"/><line x1="481.3" y1="297.01" x2="481.3" y2="313.44" stroke="#b8b8b8" stroke-width="1.3"/><line x1="560" y1="297.01" x2="560" y2="313.44" stroke="#b8b8b8" stroke-width="1.3"/><line x1="672.3" y1="297.01" x2="672.3" y2="313.44" stroke="#b8b8b8" stroke-width="1.3"/><line x1="51" y1="329.87" x2="692" y2="329.87" stroke="#bdbdbd" stroke-width="1.3"/><line x1="65.5" y1="313.44" x2="65.5" y2="329.87" stroke="#b8b8b8" stroke-width="1.3"/><line x1="80.8" y1="313.44" x2="80.8" y2="329.87" stroke="#b8b8b8" stroke-width="1.3"/><line x1="118" y1="313.44" x2="118" y2="329.87" stroke="#b8b8b8" stroke-width="1.3"/><line x1="192.7" y1="313.44" x2="192.7" y2="329.87" stroke="#b8b8b8" stroke-width="1.3"/><line x1="249.2" y1="313.44" x2="249.2" y2="329.87" stroke="#b8b8b8" stroke-width="1.3"/><line x1="312.4" y1="313.44" x2="312.4" y2="329.87" stroke="#b8b8b8" stroke-width="1.3"/><line x1="425.6" y1="313.44" x2="425.6" y2="329.87" stroke="#b8b8b8" stroke-width="1.3"/><line x1="481.3" y1="313.44" x2="481.3" y2="329.87" stroke="#b8b8b8" stroke-width="1.3"/><line x1="560" y1="313.44" x2="560" y2="329.87" stroke="#b8b8b8" stroke-width="1.3"/><line x1="672.3" y1="313.44" x2="672.3" y2="329.87" stroke="#b8b8b8" stroke-width="1.3"/></svg>
<div class="t m" style="left:34.80px;top:3.83px;color:#222;">Ind</div>
<div class="t m" style="left:34.80px;top:13.53px;color:#222;">ID</div>
<div class="t m" style="left:72.00px;top:9.13px;color:#222;">Forenames</div>
<div class="t m" style="left:146.70px;top:9.13px;color:#222;">Surname</div>
<div class="t m" style="left:203.20px;top:9.13px;color:#222;">Fact Type</div>
<div class="t m" style="left:266.40px;top:9.13px;color:#222;">Fact Date</div>
<div class="t m" style="left:435.30px;top:9.13px;color:#222;">Relation</div>
<div class="t m" style="left:514.00px;top:9.13px;color:#222;">Relation To Root</div>
<div class="t m" style="left:626.30px;top:9.13px;color:#222;">Date</div>
<div class="t m" style="left:379.20px;top:4.03px;color:#222;">Surname</div>
<div class="t m" style="left:379.20px;top:13.53px;color:#222;">at Date</div>
<svg class="r" style="left:364.5px;top:11px" width="7" height="4"><path d="M0 4 L3.5 0.3 L7 4Z" fill="#a2a2a2"/></svg>
<div class="r chk" style="left:16.400000000000006px;top:27.60px"></div>
<div class="t m" style="left:69.10px;top:29.33px;color:#fff;">William &amp; Margaret</div>
<div class="t m" style="left:143.80px;top:29.33px;color:#fff;">Hartley</div>
<div class="t m" style="left:200.30px;top:29.33px;color:#fff;">Divorce</div>
<div class="t m" style="left:263.50px;top:29.33px;color:#fff;">UNKNOWN</div>
<div class="t m" style="left:623.40px;top:29.33px;color:#fff;">UNKNOWN</div>
<div class="r chk" style="left:16.400000000000006px;top:44.03px"></div>
<div class="t m" style="left:31.90px;top:45.76px;color:#222;">I3188</div>
<div class="t m" style="left:69.10px;top:45.76px;color:#222;">William</div>
<div class="t m" style="left:143.80px;top:45.76px;color:#222;">Hartley</div>
<div class="t m" style="left:200.30px;top:45.76px;color:#222;">Birth</div>
<div class="t m" style="left:263.50px;top:45.76px;color:#222;">1 NOV 1833</div>
<div class="t m" style="left:376.70px;top:45.76px;color:#222;">Hartley</div>
<div class="t m" style="left:432.40px;top:45.76px;color:#222;">Direct Ancestor</div>
<div class="t m" style="left:511.10px;top:45.76px;color:#222;">grandfather</div>
<div class="t m" style="left:623.40px;top:45.76px;color:#222;">1 NOV 1833</div>
<div class="r chk" style="left:16.400000000000006px;top:60.46px"></div>
<div class="t m" style="left:31.90px;top:62.19px;color:#222;">I3188</div>
<div class="t m" style="left:69.10px;top:62.19px;color:#222;">William</div>
<div class="t m" style="left:143.80px;top:62.19px;color:#222;">Hartley</div>
<div class="t m" style="left:200.30px;top:62.19px;color:#222;">Parental Info</div>
<div class="t m" style="left:263.50px;top:62.19px;color:#222;">1 NOV 1833</div>
<div class="t m" style="left:376.70px;top:62.19px;color:#222;">Hartley</div>
<div class="t m" style="left:432.40px;top:62.19px;color:#222;">Direct Ancestor</div>
<div class="t m" style="left:511.10px;top:62.19px;color:#222;">grandfather</div>
<div class="t m" style="left:623.40px;top:62.19px;color:#222;">1 NOV 1833</div>
<div class="r chk" style="left:16.400000000000006px;top:76.89px"></div>
<div class="t m" style="left:31.90px;top:78.62px;color:#222;">I3188</div>
<div class="t m" style="left:69.10px;top:78.62px;color:#222;">William</div>
<div class="t m" style="left:143.80px;top:78.62px;color:#222;">Hartley</div>
<div class="t m" style="left:200.30px;top:78.62px;color:#222;">Parental Info</div>
<div class="t m" style="left:263.50px;top:78.62px;color:#222;">1 NOV 1833</div>
<div class="t m" style="left:376.70px;top:78.62px;color:#222;">Hartley</div>
<div class="t m" style="left:432.40px;top:78.62px;color:#222;">Direct Ancestor</div>
<div class="t m" style="left:511.10px;top:78.62px;color:#222;">grandfather</div>
<div class="t m" style="left:623.40px;top:78.62px;color:#222;">1 NOV 1833</div>
<div class="r chk" style="left:16.400000000000006px;top:93.32px"></div>
<div class="t m" style="left:31.90px;top:95.05px;color:#222;">I2723</div>
<div class="t m" style="left:69.10px;top:95.05px;color:#222;">Margaret</div>
<div class="t m" style="left:143.80px;top:95.05px;color:#222;">Stewart</div>
<div class="t m" style="left:200.30px;top:95.05px;color:#222;">Birth</div>
<div class="t m" style="left:263.50px;top:95.05px;color:#222;">ABT 1835</div>
<div class="t m" style="left:376.70px;top:95.05px;color:#222;">Stewart</div>
<div class="t m" style="left:432.40px;top:95.05px;color:#222;">Direct Ancestor</div>
<div class="t m" style="left:511.10px;top:95.05px;color:#222;">grandmother</div>
<div class="t m" style="left:623.40px;top:95.05px;color:#222;">ABT 1835</div>
<div class="r chk" style="left:16.400000000000006px;top:109.75px"></div>
<div class="t m" style="left:31.90px;top:111.48px;color:#222;">I3188</div>
<div class="t m" style="left:69.10px;top:111.48px;color:#222;">William</div>
<div class="t m" style="left:143.80px;top:111.48px;color:#222;">Hartley</div>
<div class="t m" style="left:200.30px;top:111.48px;color:#222;">Child Born</div>
<div class="t m" style="left:263.50px;top:111.48px;color:#222;">16 JAN 1864</div>
<div class="t m" style="left:376.70px;top:111.48px;color:#222;">Hartley</div>
<div class="t m" style="left:432.40px;top:111.48px;color:#222;">Direct Ancestor</div>
<div class="t m" style="left:511.10px;top:111.48px;color:#222;">grandfather</div>
<div class="t m" style="left:623.40px;top:111.48px;color:#222;">1 NOV 1833</div>
<div class="r chk" style="left:16.400000000000006px;top:126.18px"></div>
<div class="t m" style="left:31.90px;top:127.91px;color:#222;">I2723</div>
<div class="t m" style="left:69.10px;top:127.91px;color:#222;">Margaret</div>
<div class="t m" style="left:143.80px;top:127.91px;color:#222;">Stewart</div>
<div class="t m" style="left:200.30px;top:127.91px;color:#222;">Child Born</div>
<div class="t m" style="left:263.50px;top:127.91px;color:#222;">16 JAN 1864</div>
<div class="t m" style="left:376.70px;top:127.91px;color:#222;">Stewart</div>
<div class="t m" style="left:432.40px;top:127.91px;color:#222;">Direct Ancestor</div>
<div class="t m" style="left:511.10px;top:127.91px;color:#222;">grandmother</div>
<div class="t m" style="left:623.40px;top:127.91px;color:#222;">ABT 1835</div>
<div class="r chk" style="left:16.400000000000006px;top:142.61px"></div>
<div class="t m" style="left:31.90px;top:144.34px;color:#222;">I2694</div>
<div class="t m" style="left:69.10px;top:144.34px;color:#222;">William</div>
<div class="t m" style="left:143.80px;top:144.34px;color:#222;">Hartley</div>
<div class="t m" style="left:200.30px;top:144.34px;color:#222;">Birth</div>
<div class="t m" style="left:263.50px;top:144.34px;color:#222;">16 JAN 1864</div>
<div class="t m" style="left:376.70px;top:144.34px;color:#222;">Hartley</div>
<div class="t m" style="left:432.40px;top:144.34px;color:#222;">Direct Ancestor</div>
<div class="t m" style="left:511.10px;top:144.34px;color:#222;">father</div>
<div class="t m" style="left:623.40px;top:144.34px;color:#222;">16 JAN 1864</div>
<div class="r chk" style="left:16.400000000000006px;top:159.04px"></div>
<div class="t m" style="left:31.90px;top:160.77px;color:#222;">I3188</div>
<div class="t m" style="left:69.10px;top:160.77px;color:#222;">William</div>
<div class="t m" style="left:143.80px;top:160.77px;color:#222;">Hartley</div>
<div class="t m" style="left:200.30px;top:160.77px;color:#222;">Death</div>
<div class="t m" style="left:263.50px;top:160.77px;color:#222;">6 NOV 1906</div>
<div class="t m" style="left:376.70px;top:160.77px;color:#222;">Hartley</div>
<div class="t m" style="left:432.40px;top:160.77px;color:#222;">Direct Ancestor</div>
<div class="t m" style="left:511.10px;top:160.77px;color:#222;">grandfather</div>
<div class="t m" style="left:623.40px;top:160.77px;color:#222;">1 NOV 1833</div>
<div class="r" style="left:0px;top:240px;width:641px;height:13px;background:#f0f0f0;"></div>
<div class="r" style="left:12.7px;top:241px;width:233.3px;height:11.5px;background:#d2d2d2;"></div>
<svg class="r" style="left:3px;top:243px" width="7" height="8"><path d="M4.6 0.9 L1.8 3.8 L4.6 6.7" stroke="#555" stroke-width="1.8" fill="none"/></svg>
<svg class="r" style="left:631.5px;top:243px" width="7" height="8"><path d="M1.8 0.9 L4.6 3.8 L1.8 6.7" stroke="#555" stroke-width="1.8" fill="none"/></svg>
</div>
<svg class="r" style="left:49px;top:155px" width="645" height="257" viewBox="49 155 645 257"><line x1="50" y1="156.8" x2="692.5" y2="156.8" stroke="#5a5a5a" stroke-width="1.5"/><line x1="50.7" y1="156" x2="50.7" y2="411" stroke="#5a5a5a" stroke-width="1.4"/><line x1="692" y1="156" x2="692" y2="411" stroke="#5a5a5a" stroke-width="1.3"/><line x1="50" y1="410.3" x2="692.5" y2="410.3" stroke="#5a5a5a" stroke-width="1.4"/></svg>
<div class="r" style="left:50px;top:411px;width:642px;height:9px;background:#f0f0f0;"></div>
<div class="t s" style="left:52.50px;top:416.13px;color:#222;">0 Records</div>
<div class="r" style="left:689px;top:418px;width:1.2px;height:1.2px;background:#a0a0a0;"></div>
</body></html>
